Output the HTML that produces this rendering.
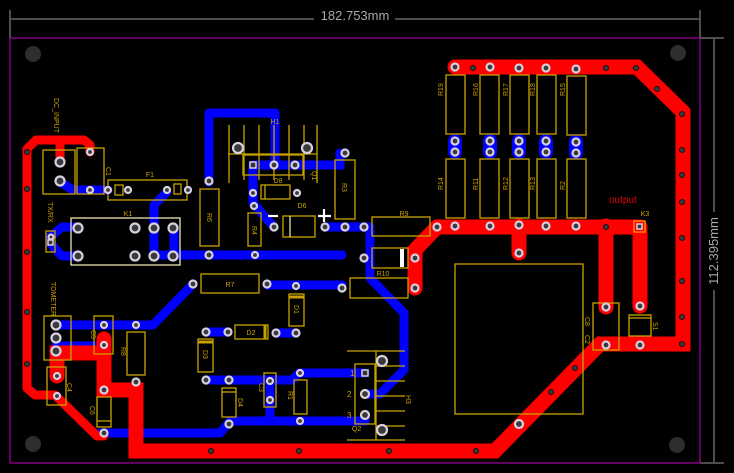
<!DOCTYPE html>
<html><head><meta charset="utf-8"><style>
html,body{margin:0;padding:0;background:#000;}
svg{display:block}
text{font-family:"Liberation Sans",sans-serif;}
</style></head><body>
<svg width="734" height="473" viewBox="0 0 734 473" xmlns="http://www.w3.org/2000/svg">
<rect width="734" height="473" fill="#000"/>
<!-- dimensions -->
<g stroke="#9a9a9a" stroke-width="1" fill="none">
<line x1="10" y1="10" x2="10" y2="38"/>
<line x1="700" y1="10" x2="700" y2="38"/>
<line x1="11" y1="19" x2="314" y2="19"/>
<line x1="395" y1="19" x2="699" y2="19"/>
<line x1="700" y1="38" x2="724" y2="38"/>
<line x1="700" y1="463" x2="724" y2="463"/>
<line x1="714" y1="39" x2="714" y2="212"/>
<line x1="714" y1="290" x2="714" y2="462"/>
</g>
<text x="355" y="20" font-size="13" fill="#a8a8a8" text-anchor="middle">182.753mm</text>
<text transform="translate(718,251) rotate(-90)" font-size="13" fill="#a8a8a8" text-anchor="middle">112.395mm</text>
<rect x="10" y="38" width="690" height="425" fill="none" stroke="#c000c0" stroke-width="1"/>
<g fill="#2e2e2e"><circle cx="33" cy="54" r="8"/><circle cx="678" cy="53" r="8"/><circle cx="33" cy="444" r="8"/><circle cx="677" cy="445" r="8"/></g>

<!-- blue traces -->
<g stroke="#0000ff" stroke-width="9" fill="none" stroke-linejoin="round" stroke-linecap="round">
<path d="M209,182 V113 H275 V165"/>
<path d="M253,165 H340 V153" stroke-linejoin="miter"/>
<path d="M253,165 V203 L274,227"/>
<path d="M325,227 H370 V278 L404,313 V370 L380,394 H365"/>
<path d="M60,182 L73,190 H108"/>
<path d="M167,192 L154,205 V256"/>
<path d="M174,227 V256"/>
<path d="M160,255 H342"/>
<path d="M78,227 H62 L50,237"/>
<path d="M78,256 H62 L50,243"/>
<path d="M193,284 L153,325 H56"/>
<path d="M267,285 H342"/>
<path d="M56,346 H97"/>
<path d="M206,332 H228"/>
<path d="M276,333 H296"/>
<path d="M206,380 H292 L299,373 H365"/>
<path d="M270,380 V421"/>
<path d="M100,433 H220 L230,421 H365"/>
<g stroke-width="14">
<path d="M455,141 V152"/><path d="M490,141 V152"/><path d="M519,141 V152"/><path d="M546,141 V152"/><path d="M576,142 V153"/>
</g>
</g>

<!-- red traces -->
<g stroke="#ff0000" stroke-width="15" fill="none" stroke-linejoin="round" stroke-linecap="round">
<path d="M455,67 H637 L683,112 V344 H600 L495,451 H136 V390 H104 V353 H57 V376" stroke-linejoin="miter"/>
<path d="M104,339 V390"/>
<path d="M437,227 H640 V306"/>
<path d="M437,227 L415,250 V288"/>
<path d="M519,226 V253"/>
<path d="M606,226 V307"/>
</g>
<g stroke="#ff0000" stroke-width="9" fill="none" stroke-linejoin="round" stroke-linecap="round">
<path d="M90,152 V145 L84,140 H36 L27,149 V388 L35,395 H55 L97,436 H104"/>
<path d="M60,140 V162"/>
</g>

<!-- silkscreen -->
<g stroke="#c9a200" stroke-width="1.3" fill="none">
<rect x="43" y="150" width="32" height="44"/>
<rect x="77" y="148" width="27" height="46"/>
<rect x="108" y="180" width="79" height="20"/>
<rect x="115" y="185" width="8" height="10"/><rect x="174" y="184" width="7" height="10"/>
<rect x="46" y="231" width="9" height="21"/>
<rect x="200" y="189" width="19" height="57"/>
<path d="M229,125 V183 M244,125 V180 M259,125 V180 M274,125 V180 M289,125 V180 M304,125 V180 M317,125 V183 M228,154 H317"/>
<rect x="243" y="155" width="60" height="20"/>
<rect x="261" y="185" width="29" height="14"/><line x1="265" y1="185" x2="265" y2="199"/>
<rect x="335" y="160" width="20" height="59"/>
<rect x="248" y="213" width="13" height="33"/>
<rect x="283" y="216" width="32" height="21"/><line x1="290" y1="216" x2="290" y2="237" stroke="#e8e0a0"/>
<rect x="372" y="217" width="58" height="19"/>
<rect x="372" y="248" width="36" height="20"/>
<rect x="350" y="278" width="58" height="20"/>
<rect x="201" y="274" width="58" height="19"/>
<rect x="289" y="294" width="15" height="32"/><line x1="289" y1="297" x2="304" y2="297" stroke-width="3"/>
<rect x="235" y="325" width="33" height="14"/><line x1="265" y1="325" x2="265" y2="339" stroke-width="3"/>
<rect x="198" y="339" width="15" height="33"/><line x1="198" y1="342" x2="213" y2="342" stroke-width="3"/>
<rect x="44" y="316" width="27" height="44"/>
<rect x="94" y="316" width="19" height="38"/>
<rect x="127" y="332" width="18" height="43"/>
<rect x="47" y="367" width="19" height="38"/>
<rect x="97" y="397" width="14" height="30"/><line x1="97" y1="421" x2="111" y2="421"/>
<rect x="222" y="388" width="14" height="29"/><line x1="222" y1="392" x2="236" y2="392"/>
<rect x="264" y="373" width="12" height="34"/>
<rect x="294" y="380" width="13" height="34"/>
<rect x="355" y="364" width="20" height="60"/>
<path d="M347,351 H405 M376,351 V440 M376,366 H405 M376,381 H405 M376,396 H405 M376,411 H405 M376,426 H405 M347,440 H405"/>
<rect x="455" y="264" width="128" height="150"/>
<rect x="593" y="303" width="26" height="47"/>
<rect x="629" y="315" width="22" height="21"/><line x1="629" y1="318" x2="651" y2="318"/>
<rect x="446" y="75" width="19" height="59"/><rect x="480" y="75" width="19" height="59"/><rect x="510" y="75" width="19" height="59"/><rect x="537" y="75" width="19" height="59"/><rect x="567" y="76" width="19" height="59"/>
<rect x="446" y="159" width="19" height="59"/><rect x="480" y="159" width="19" height="59"/><rect x="510" y="159" width="19" height="59"/><rect x="537" y="159" width="19" height="59"/><rect x="567" y="159" width="19" height="59"/>
<rect x="634" y="221" width="11" height="11" stroke="#ff9900"/>
</g>
<rect x="71" y="218" width="109" height="47" fill="none" stroke="#eee8b0" stroke-width="1.3"/>
<rect x="400" y="249" width="4" height="18" fill="#fff"/>
<rect x="256" y="250" width="0" height="0"/>
<!-- white markers -->
<g stroke="#fff" stroke-width="2.2">
<path d="M268,216 H278"/><path d="M318,216 H331 M324,209 V222"/>
</g>

<!-- labels -->
<g fill="#c9a200" font-size="7">
<text x="150" y="177" text-anchor="middle">F1</text>
<text x="128" y="216" text-anchor="middle">K1</text>
<text x="275" y="124" text-anchor="middle">H1</text>
<text x="278" y="183" text-anchor="middle">D8</text>
<text x="302" y="208" text-anchor="middle">D6</text>
<text x="404" y="216" text-anchor="middle">R9</text>
<text x="383" y="276" text-anchor="middle">R10</text>
<text x="230" y="287" text-anchor="middle">R7</text>
<text x="251" y="335" text-anchor="middle">D2</text>
<text x="645" y="216" text-anchor="middle">K3</text>
<text transform="translate(54,98) rotate(90)">DC_INPUT</text>
<text transform="translate(48,202) rotate(90)">TX/RX</text>
<text transform="translate(51,282) rotate(90)">TOMETER</text>
<text transform="translate(106,167) rotate(90)">C1</text>
<text transform="translate(207,213) rotate(90)">R6</text>
<text transform="translate(342,183) rotate(90)">R3</text>
<text transform="translate(252,226) rotate(90)">R4</text>
<text transform="translate(294,305) rotate(90)">D1</text>
<text transform="translate(203,350) rotate(90)">D3</text>
<text transform="translate(91,330) rotate(90)">C5</text>
<text transform="translate(121,347) rotate(90)">R8</text>
<text transform="translate(67,383) rotate(90)">C4</text>
<text transform="translate(90,406) rotate(90)">C6</text>
<text transform="translate(238,398) rotate(90)">D4</text>
<text transform="translate(259,383) rotate(90)">C3</text>
<text transform="translate(288,391) rotate(90)">R1</text>
<text transform="translate(312,171) rotate(90)">Q1</text>
<text transform="translate(406,395) rotate(90)">H3</text>
<text transform="translate(585,317) rotate(90)">C8</text>
<text transform="translate(585,335) rotate(90)">C2</text>
<text transform="translate(653,322) rotate(90)">S1</text>
<text x="350" y="376" font-size="8">1</text><text x="347" y="397" font-size="8">2</text><text x="347" y="418" font-size="8">3</text>
<text x="352" y="431">Q2</text>
<text transform="translate(443,96) rotate(-90)">R19</text>
<text transform="translate(478,96) rotate(-90)">R16</text>
<text transform="translate(508,96) rotate(-90)">R17</text>
<text transform="translate(535,96) rotate(-90)">R18</text>
<text transform="translate(565,96) rotate(-90)">R15</text>
<text transform="translate(443,190) rotate(-90)">R14</text>
<text transform="translate(478,190) rotate(-90)">R11</text>
<text transform="translate(508,190) rotate(-90)">R12</text>
<text transform="translate(535,190) rotate(-90)">R13</text>
<text transform="translate(565,190) rotate(-90)">R2</text>
</g>
<text x="609" y="203" font-size="10" fill="#e00000">output</text>

<!-- pads -->
<g fill="#3a3a3a" stroke="#d8d0e0" stroke-width="2.2">
<circle cx="60" cy="162" r="4.5"/><circle cx="60" cy="181" r="4.5"/>
<circle cx="90" cy="152" r="3"/><circle cx="90" cy="190" r="3"/>
<circle cx="108" cy="190" r="3"/><circle cx="128" cy="190" r="3"/><circle cx="167" cy="190" r="3"/><circle cx="188" cy="190" r="3"/>
<circle cx="78" cy="228" r="4.5"/><circle cx="135" cy="228" r="4.5"/><circle cx="154" cy="228" r="4.5"/><circle cx="173" cy="228" r="4.5"/>
<circle cx="78" cy="256" r="4.5"/><circle cx="135" cy="256" r="4.5"/><circle cx="154" cy="256" r="4.5"/><circle cx="173" cy="256" r="4.5"/>
<circle cx="51" cy="237" r="2.5"/>
<circle cx="209" cy="181" r="3.5"/><circle cx="209" cy="255" r="3.5"/><circle cx="255" cy="255" r="3"/>
<circle cx="238" cy="148" r="5"/><circle cx="307" cy="148" r="5"/>
<circle cx="274" cy="165" r="3.5"/><circle cx="295" cy="165" r="3.5"/>
<circle cx="253" cy="193" r="3"/><circle cx="297" cy="193" r="3"/><circle cx="254" cy="206" r="3"/><circle cx="274" cy="227" r="3.5"/>
<circle cx="345" cy="153" r="3.5"/><circle cx="325" cy="227" r="3.5"/><circle cx="345" cy="227" r="3.5"/><circle cx="364" cy="227" r="3.5"/>
<circle cx="364" cy="258" r="3.5"/><circle cx="342" cy="288" r="3.5"/>
<circle cx="193" cy="284" r="3.5"/><circle cx="267" cy="284" r="3.5"/><circle cx="296" cy="286" r="3"/>
<circle cx="56" cy="325" r="4.5"/><circle cx="56" cy="338" r="4.5"/><circle cx="56" cy="351" r="4.5"/>
<circle cx="104" cy="325" r="3"/><circle cx="136" cy="325" r="3"/><circle cx="104" cy="345" r="3"/>
<circle cx="57" cy="376" r="3"/><circle cx="57" cy="396" r="3"/>
<circle cx="104" cy="390" r="3.5"/><circle cx="136" cy="382" r="3.5"/><circle cx="104" cy="433" r="3.5"/>
<circle cx="206" cy="332" r="3.5"/><circle cx="228" cy="332" r="3.5"/><circle cx="276" cy="333" r="3.5"/><circle cx="296" cy="333" r="3.5"/>
<circle cx="206" cy="380" r="3.5"/><circle cx="229" cy="380" r="3.5"/><circle cx="270" cy="381" r="3"/><circle cx="270" cy="400" r="3"/>
<circle cx="300" cy="373" r="3"/><circle cx="229" cy="424" r="3.5"/><circle cx="300" cy="421" r="3"/>
<circle cx="365" cy="394" r="4"/><circle cx="365" cy="415" r="4"/><circle cx="382" cy="361" r="5"/><circle cx="382" cy="430" r="5"/>
<circle cx="455" cy="67" r="3.5"/><circle cx="490" cy="67" r="3.5"/><circle cx="519" cy="68" r="3.5"/><circle cx="546" cy="68" r="3.5"/><circle cx="576" cy="69" r="3.5"/>
<circle cx="455" cy="141" r="3.5"/><circle cx="490" cy="141" r="3.5"/><circle cx="519" cy="141" r="3.5"/><circle cx="546" cy="141" r="3.5"/><circle cx="576" cy="142" r="3.5"/>
<circle cx="455" cy="152" r="3.5"/><circle cx="490" cy="152" r="3.5"/><circle cx="519" cy="152" r="3.5"/><circle cx="546" cy="152" r="3.5"/><circle cx="576" cy="153" r="3.5"/>
<circle cx="437" cy="227" r="3.5"/><circle cx="455" cy="226" r="3.5"/><circle cx="490" cy="226" r="3.5"/><circle cx="519" cy="225" r="3.5"/><circle cx="546" cy="226" r="3.5"/><circle cx="576" cy="226" r="3.5"/>
<circle cx="415" cy="258" r="3.5"/><circle cx="415" cy="288" r="3.5"/><circle cx="519" cy="253" r="3.5"/>
<circle cx="606" cy="307" r="3.5"/><circle cx="640" cy="306" r="3.5"/><circle cx="606" cy="345" r="3.5"/><circle cx="640" cy="345" r="3.5"/>
<circle cx="519" cy="424" r="4"/>
</g>
<rect x="637" y="224" width="5" height="5" fill="#333" stroke="#d8d0e0" stroke-width="1.5"/>
<rect x="48" y="240" width="5" height="5" fill="#333" stroke="#d8d0e0" stroke-width="1.5"/>
<rect x="250" y="162" width="6" height="6" fill="#333" stroke="#d8d0e0" stroke-width="1.5"/>
<rect x="362" y="370" width="6" height="6" fill="#333" stroke="#d8d0e0" stroke-width="1.5"/>
<!-- vias -->
<g fill="#3a3a3a" stroke="#111" stroke-width="1">
<circle cx="473" cy="68" r="2.5"/><circle cx="606" cy="68" r="2.5"/><circle cx="636" cy="68" r="2.5"/><circle cx="657" cy="89" r="2.5"/>
<circle cx="682" cy="114" r="2.5"/><circle cx="682" cy="150" r="2.5"/><circle cx="682" cy="175" r="2.5"/><circle cx="682" cy="202" r="2.5"/><circle cx="682" cy="238" r="2.5"/>
<circle cx="682" cy="281" r="2.5"/><circle cx="682" cy="317" r="2.5"/><circle cx="682" cy="344" r="2.5"/>
<circle cx="606" cy="227" r="2.5"/><circle cx="575" cy="368" r="2.5"/><circle cx="551" cy="392" r="2.5"/>
<circle cx="211" cy="451" r="2.5"/><circle cx="299" cy="451" r="2.5"/><circle cx="389" cy="451" r="2.5"/><circle cx="476" cy="451" r="2.5"/>
<circle cx="27" cy="152" r="2.5"/><circle cx="27" cy="189" r="2.5"/><circle cx="27" cy="252" r="2.5"/><circle cx="27" cy="312" r="2.5"/><circle cx="27" cy="364" r="2.5"/>
</g>
</svg>
</body></html>
